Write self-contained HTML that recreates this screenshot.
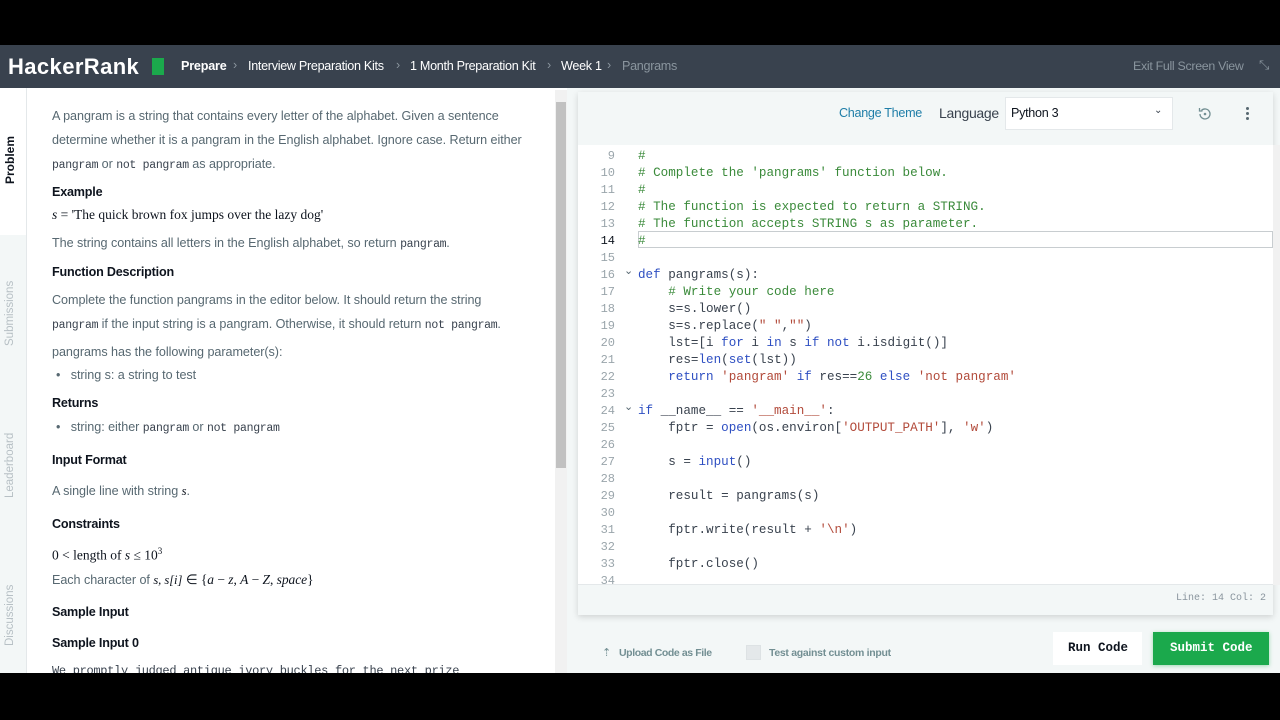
<!DOCTYPE html>
<html><head><meta charset="utf-8"><style>
*{margin:0;padding:0;box-sizing:border-box}
body{width:1280px;height:720px;background:#000;position:relative;overflow:hidden;font-family:"Liberation Sans",sans-serif}
.a{position:absolute;white-space:nowrap}
.hdr{left:0;top:45px;width:1280px;height:43px;background:#39424e}
.t{font-size:12.6px;color:#576871;letter-spacing:-0.05px}
.h{font-size:12.6px;color:#0e141e;font-weight:bold;letter-spacing:-0.2px}
.m{font-family:"Liberation Mono",monospace;font-size:11.5px;color:#39424e;letter-spacing:-0.3px}
.code{font-family:"Liberation Mono",monospace;font-size:12.6px;line-height:17px}
.ln{position:absolute;left:585px;width:30px;text-align:right;color:#9aa5ab;font-family:"Liberation Mono",monospace;font-size:12px}
.cl{position:absolute;left:638px;color:#39424e;white-space:pre}
.c{color:#3a8a3a}.k{color:#2e4fc2}.s{color:#b24a3a}.n{color:#3a8a3a}
.vt{position:absolute;transform:rotate(-90deg);transform-origin:left top;font-size:11.5px;white-space:nowrap}
</style></head><body>
<div class="a hdr"></div>
<div class="a" style="left:8px;top:54px;font-size:22px;font-weight:bold;color:#fff;letter-spacing:0.4px">HackerRank</div>
<div class="a" style="left:152px;top:58px;width:12px;height:17px;background:#1ba94c"></div>
<div class="a" style="left:181px;top:59px;font-size:12.6px;color:#fff;font-weight:bold;letter-spacing:-0.2px">Prepare</div>
<div class="a" style="left:233px;top:58px;font-size:12.6px;color:#8a959e;letter-spacing:-0.2px">›</div>
<div class="a" style="left:248px;top:59px;font-size:12.6px;color:#fff;letter-spacing:-0.3px">Interview Preparation Kits</div>
<div class="a" style="left:396px;top:58px;font-size:12.6px;color:#8a959e">›</div>
<div class="a" style="left:410px;top:59px;font-size:12.6px;color:#fff;letter-spacing:-0.3px">1 Month Preparation Kit</div>
<div class="a" style="left:547px;top:58px;font-size:12.6px;color:#8a959e">›</div>
<div class="a" style="left:561px;top:59px;font-size:12.6px;color:#fff;letter-spacing:-0.3px">Week 1</div>
<div class="a" style="left:607px;top:58px;font-size:12.6px;color:#8a959e">›</div>
<div class="a" style="left:622px;top:59px;font-size:12.6px;color:#8a959e;letter-spacing:-0.3px">Pangrams</div>
<div class="a" style="left:1133px;top:59px;font-size:12.4px;color:#8a959e;letter-spacing:-0.3px">Exit Full Screen View</div>
<div class="a" style="left:1259px;top:57px;font-size:13px;color:#8a959e">⤡</div>

<div class="a" style="left:0;top:88px;width:567px;height:585px;background:#fff"></div>
<div class="a" style="left:0;top:235px;width:26px;height:438px;background:#f3f7f7"></div>
<div class="a" style="left:26px;top:88px;width:1px;height:585px;background:#e4e8ea"></div>
<div class="vt" style="left:3px;top:184px;font-weight:bold;color:#0e141e;font-size:12px">Problem</div>
<div class="vt" style="left:4px;top:346px;color:#b7c0c5">Submissions</div>
<div class="vt" style="left:4px;top:498px;color:#b7c0c5">Leaderboard</div>
<div class="vt" style="left:4px;top:646px;color:#b7c0c5">Discussions</div>
<div class="a" style="left:555px;top:90px;width:12px;height:583px;background:#f1f1f1"></div>
<div class="a" style="left:556px;top:102px;width:10px;height:366px;background:#c1c1c1"></div>

<div class="a t" style="left:52px;top:109px">A pangram is a string that contains every letter of the alphabet. Given a sentence</div>
<div class="a t" style="left:52px;top:133px">determine whether it is a pangram in the English alphabet. Ignore case. Return either</div>
<div class="a t" style="left:52px;top:157px"><span class="m">pangram</span> or <span class="m">not pangram</span> as appropriate.</div>
<div class="a h" style="left:52px;top:185px">Example</div>
<div class="a" style="left:52px;top:207px;font-family:'Liberation Serif',serif;font-size:13.5px;color:#0e141e"><i>s</i> = 'The quick brown fox jumps over the lazy dog'</div>
<div class="a t" style="left:52px;top:236px">The string contains all letters in the English alphabet, so return <span class="m">pangram</span>.</div>
<div class="a h" style="left:52px;top:265px">Function Description</div>
<div class="a t" style="left:52px;top:293px">Complete the function pangrams in the editor below. It should return the string</div>
<div class="a t" style="left:52px;top:317px"><span class="m">pangram</span> if the input string is a pangram. Otherwise, it should return <span class="m">not pangram</span>.</div>
<div class="a t" style="left:52px;top:345px">pangrams has the following parameter(s):</div>
<div class="a t" style="left:56px;top:368px">•&nbsp;&nbsp; string s: a string to test</div>
<div class="a h" style="left:52px;top:396px">Returns</div>
<div class="a t" style="left:56px;top:420px">•&nbsp;&nbsp; string: either <span class="m">pangram</span> or <span class="m">not pangram</span></div>
<div class="a h" style="left:52px;top:453px">Input Format</div>
<div class="a t" style="left:52px;top:484px">A single line with string <i style="font-family:'Liberation Serif',serif;color:#0e141e">s</i>.</div>
<div class="a h" style="left:52px;top:517px">Constraints</div>
<div class="a" style="left:52px;top:546px;font-family:'Liberation Serif',serif;font-size:13.5px;color:#0e141e">0 &lt; length of <i>s</i> ≤ 10<sup style="font-size:9px">3</sup></div>
<div class="a t" style="left:52px;top:572px">Each character of <i style="font-family:'Liberation Serif',serif;color:#0e141e">s, s[i]</i> <span style="font-family:'Liberation Serif',serif;color:#0e141e;font-size:13.5px">∈ {<i>a</i> − <i>z</i>, <i>A</i> − <i>Z</i>, <i>space</i>}</span></div>
<div class="a h" style="left:52px;top:605px">Sample Input</div>
<div class="a h" style="left:52px;top:636px">Sample Input 0</div>
<div class="a m" style="left:52px;top:664px;font-size:12px">We promptly judged antique ivory buckles for the next prize</div>

<div class="a" style="left:567px;top:88px;width:713px;height:585px;background:#f3f7f7"></div>
<div class="a" style="left:578px;top:92px;width:695px;height:523px;background:#f3f7f7;box-shadow:0 2px 6px rgba(0,0,0,0.15)"></div>
<div class="a" style="left:578px;top:145px;width:695px;height:440px;background:#fff;border-bottom:1px solid #e4e8ea"></div>
<div class="a" style="left:1273px;top:145px;width:7px;height:440px;background:#f1f1f1"></div>
<div class="a" style="left:839px;top:106px;font-size:12.6px;color:#1f7ea8;letter-spacing:-0.3px">Change Theme</div>
<div class="a" style="left:939px;top:105px;font-size:14px;color:#39424e;letter-spacing:-0.3px">Language</div>
<div class="a" style="left:1005px;top:97px;width:168px;height:33px;background:#fff;border:1px solid #e4e8ea"></div>
<div class="a" style="left:1011px;top:106px;font-size:12.6px;color:#0e141e;letter-spacing:-0.3px">Python 3</div>
<div class="a" style="left:1154px;top:105px;font-size:10px;color:#39424e">⌄</div>
<svg class="a" style="left:1197px;top:106px" width="16" height="16" viewBox="0 0 16 16"><path d="M3 8a5 5 0 1 0 1.5-3.6M2.5 2v3h3" fill="none" stroke="#738f93" stroke-width="1.3"/><circle cx="8" cy="8" r="1.3" fill="#738f93"/></svg>
<div class="a" style="left:1246px;top:107px;width:3px;height:3px;background:#576871;border-radius:50%;box-shadow:0 5px #576871,0 10px #576871"></div>

<div class="a" style="left:638px;top:231px;width:635px;height:17px;border:1px solid #c8cdd0"></div>
<div class="code">
<div class="ln" style="top:148px">9</div><div class="cl c" style="top:148px">#</div>
<div class="ln" style="top:165px">10</div><div class="cl c" style="top:165px"># Complete the 'pangrams' function below.</div>
<div class="ln" style="top:182px">11</div><div class="cl c" style="top:182px">#</div>
<div class="ln" style="top:199px">12</div><div class="cl c" style="top:199px"># The function is expected to return a STRING.</div>
<div class="ln" style="top:216px">13</div><div class="cl c" style="top:216px"># The function accepts STRING s as parameter.</div>
<div class="ln" style="top:233px;color:#0e141e">14</div><div class="cl c" style="top:233px">#</div>
<div class="ln" style="top:250px">15</div>
<div class="ln" style="top:267px">16</div><div class="cl" style="top:267px"><span class="k">def</span> pangrams(s):</div>
<div class="ln" style="top:284px">17</div><div class="cl c" style="top:284px">    # Write your code here</div>
<div class="ln" style="top:301px">18</div><div class="cl" style="top:301px">    s=s.lower()</div>
<div class="ln" style="top:318px">19</div><div class="cl" style="top:318px">    s=s.replace(<span class="s">" "</span>,<span class="s">""</span>)</div>
<div class="ln" style="top:335px">20</div><div class="cl" style="top:335px">    lst=[i <span class="k">for</span> i <span class="k">in</span> s <span class="k">if not</span> i.isdigit()]</div>
<div class="ln" style="top:352px">21</div><div class="cl" style="top:352px">    res=<span class="k">len</span>(<span class="k">set</span>(lst))</div>
<div class="ln" style="top:369px">22</div><div class="cl" style="top:369px">    <span class="k">return</span> <span class="s">'pangram'</span> <span class="k">if</span> res==<span class="n">26</span> <span class="k">else</span> <span class="s">'not pangram'</span></div>
<div class="ln" style="top:386px">23</div>
<div class="ln" style="top:403px">24</div><div class="cl" style="top:403px"><span class="k">if</span> __name__ == <span class="s">'__main__'</span>:</div>
<div class="ln" style="top:420px">25</div><div class="cl" style="top:420px">    fptr = <span class="k">open</span>(os.environ[<span class="s">'OUTPUT_PATH'</span>], <span class="s">'w'</span>)</div>
<div class="ln" style="top:437px">26</div>
<div class="ln" style="top:454px">27</div><div class="cl" style="top:454px">    s = <span class="k">input</span>()</div>
<div class="ln" style="top:471px">28</div>
<div class="ln" style="top:488px">29</div><div class="cl" style="top:488px">    result = pangrams(s)</div>
<div class="ln" style="top:505px">30</div>
<div class="ln" style="top:522px">31</div><div class="cl" style="top:522px">    fptr.write(result + <span class="s">'\n'</span>)</div>
<div class="ln" style="top:539px">32</div>
<div class="ln" style="top:556px">33</div><div class="cl" style="top:556px">    fptr.close()</div>
<div class="ln" style="top:573px;height:11px;overflow:hidden">34</div>
</div>
<div class="a" style="left:624px;top:264px;font-size:11px;color:#576871">⌄</div>
<div class="a" style="left:624px;top:400px;font-size:11px;color:#576871">⌄</div>
<div class="a" style="left:1176px;top:593px;font-family:'Liberation Mono',monospace;font-size:10px;color:#8a959e">Line: 14 Col: 2</div>

<div class="a" style="left:602px;top:646px;font-size:11px;color:#738f93">⇡</div>
<div class="a" style="left:619px;top:647px;font-size:10.5px;color:#738f93;font-weight:bold;letter-spacing:-0.4px">Upload Code as File</div>
<div class="a" style="left:746px;top:645px;width:15px;height:15px;background:#e4e8ea;border:1px solid #dde2e4"></div>
<div class="a" style="left:769px;top:647px;font-size:10.5px;color:#738f93;font-weight:bold;letter-spacing:-0.3px">Test against custom input</div>
<div class="a" style="left:1053px;top:632px;width:89px;height:33px;background:#fff"></div>
<div class="a" style="left:1068px;top:641px;font-family:'Liberation Mono',monospace;font-size:12.5px;font-weight:bold;color:#0e141e">Run Code</div>
<div class="a" style="left:1153px;top:632px;width:116px;height:33px;background:#1ba94c;box-shadow:0 1px 4px rgba(27,169,76,.4)"></div>
<div class="a" style="left:1170px;top:641px;font-family:'Liberation Mono',monospace;font-size:12.5px;font-weight:bold;color:#fff">Submit Code</div>
<div class="a" style="left:0;top:673px;width:1280px;height:47px;background:#000"></div>
</body></html>
